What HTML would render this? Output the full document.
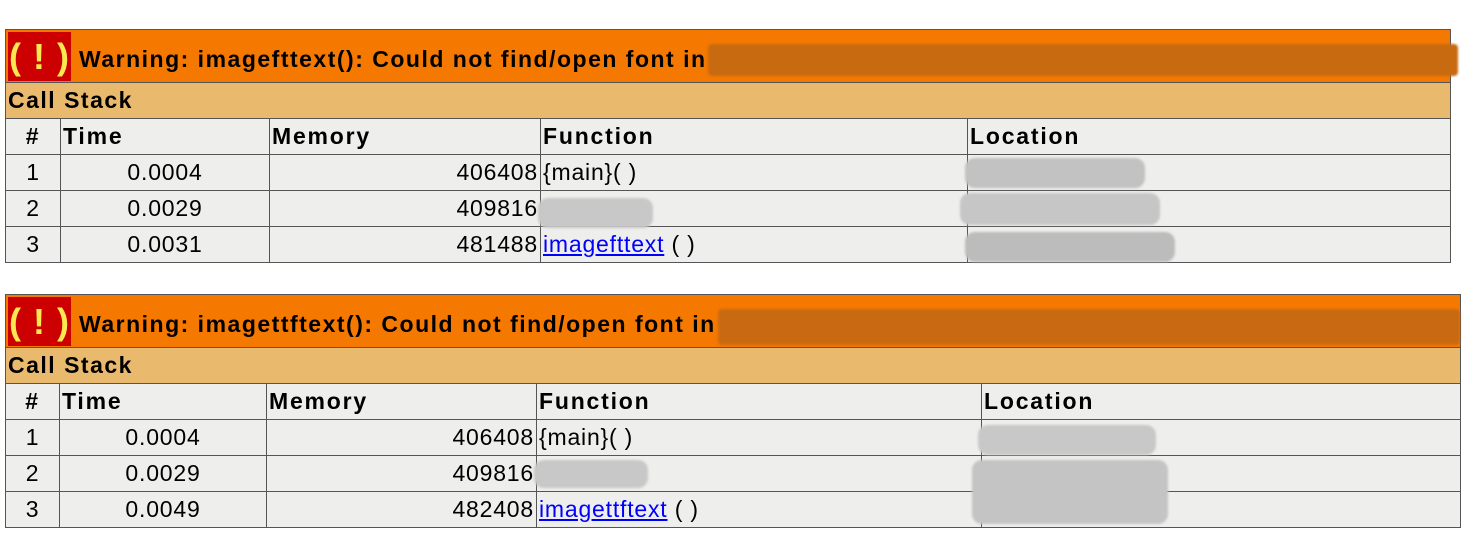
<!DOCTYPE html>
<html><head><meta charset="utf-8"><style>
body{margin:0;background:#fff;width:1464px;height:535px;overflow:hidden;position:relative;font-family:"Liberation Sans","DejaVu Sans",sans-serif;}
table{position:absolute;border-collapse:collapse;table-layout:fixed;font-size:23px;color:#000;letter-spacing:0.8px}
td,th{border:1px solid #555;padding:0 2px;height:35px;white-space:nowrap;overflow:visible;}
th{background:#eeeeec;text-align:left;font-weight:bold;letter-spacing:1.8px}
td{background:#eeeeec;}
.t{background:#f57900;height:52px;font-weight:bold;padding:0 2px;letter-spacing:1.5px}
.tt{position:relative;top:5px}
.cs{background:#e9b96e;font-weight:bold;letter-spacing:1.5px}
.ic{display:inline-block;background:#cc0000;color:#fce94f;font-size:36px;font-weight:bold;width:63px;height:49px;line-height:49px;text-align:center;vertical-align:middle;margin-right:8px;letter-spacing:1px}
.c{text-align:center}.r{text-align:right}
a{color:#00f;text-decoration:underline}
.b{position:absolute;border-radius:10px;filter:blur(1px)}
</style></head><body>
<table style="left:5px;top:29px;width:1445px">
<colgroup><col style="width:55px"><col style="width:209px"><col style="width:271px"><col style="width:427px"><col style="width:483px"></colgroup>
<tr><td class="t" colspan="5"><span class="ic">( ! )</span><span class="tt">Warning: imagefttext(): Could not find/open font in</span></td></tr>
<tr><td class="cs" colspan="5">Call Stack</td></tr>
<tr><th class="c">#</th><th>Time</th><th>Memory</th><th>Function</th><th>Location</th></tr>
<tr><td class="c">1</td><td class="c">0.0004</td><td class="r">406408</td><td>{main}( )</td><td></td></tr>
<tr><td class="c">2</td><td class="c">0.0029</td><td class="r">409816</td><td></td><td></td></tr>
<tr><td class="c">3</td><td class="c">0.0031</td><td class="r">481488</td><td><a>imagefttext</a> ( )</td><td></td></tr>
</table>
<table style="left:5px;top:294px;width:1455px">
<colgroup><col style="width:54px"><col style="width:207px"><col style="width:270px"><col style="width:445px"><col style="width:479px"></colgroup>
<tr><td class="t" colspan="5"><span class="ic">( ! )</span><span class="tt">Warning: imagettftext(): Could not find/open font in</span></td></tr>
<tr><td class="cs" colspan="5">Call Stack</td></tr>
<tr><th class="c">#</th><th>Time</th><th>Memory</th><th>Function</th><th>Location</th></tr>
<tr><td class="c">1</td><td class="c">0.0004</td><td class="r">406408</td><td>{main}( )</td><td></td></tr>
<tr><td class="c">2</td><td class="c">0.0029</td><td class="r">409816</td><td></td><td></td></tr>
<tr><td class="c">3</td><td class="c">0.0049</td><td class="r">482408</td><td><a>imagettftext</a> ( )</td><td></td></tr>
</table>
<div class="b" style="left:708px;top:44px;width:750px;height:32px;background:#c76a10;border-radius:4px"></div>
<div class="b" style="left:718px;top:309px;width:742px;height:36px;background:#c96a12;border-radius:4px"></div>
<div class="b" style="left:965px;top:158px;width:180px;height:30px;background:#c2c2c2"></div>
<div class="b" style="left:960px;top:193px;width:200px;height:32px;background:#c6c6c6"></div>
<div class="b" style="left:965px;top:232px;width:210px;height:30px;background:#bcbcbc"></div>
<div class="b" style="left:538px;top:198px;width:115px;height:30px;background:#c8c8c8"></div>
<div class="b" style="left:978px;top:425px;width:178px;height:30px;background:#c8c8c8"></div>
<div class="b" style="left:972px;top:460px;width:196px;height:64px;background:#c4c4c4"></div>
<div class="b" style="left:534px;top:460px;width:114px;height:28px;background:#c8c8c8"></div>
</body></html>
